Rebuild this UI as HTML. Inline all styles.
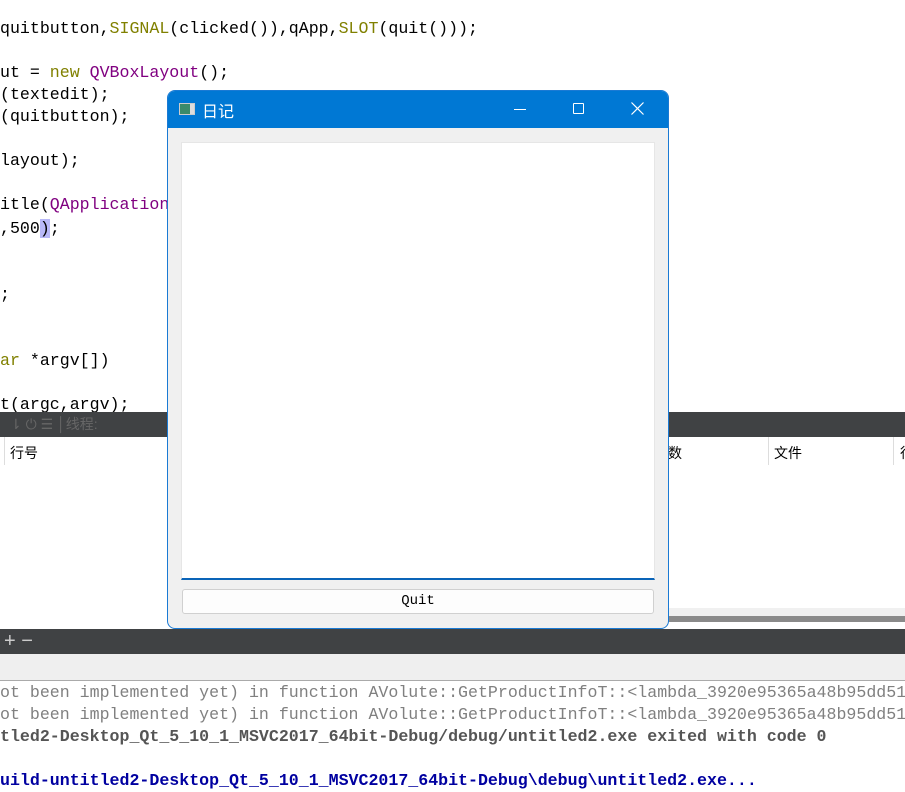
<!DOCTYPE html>
<html><head><meta charset="utf-8"><style>
*{margin:0;padding:0;box-sizing:border-box}
body{width:905px;height:792px;overflow:hidden;background:#fff;position:relative;font-family:"Liberation Sans","Noto Sans CJK SC",sans-serif}
.code{position:absolute;left:0;font:16.6px/22px "Liberation Mono","DejaVu Sans Mono",monospace;color:#000;white-space:pre}
.y{color:#808000}.p{color:#800080}
.abs{position:absolute}
.out{position:absolute;left:0;font:16.6px/22px "Liberation Mono",monospace;white-space:pre}
</style></head><body>
<div class="code" style="top:18px">quitbutton,<span class="y">SIGNAL</span>(clicked()),qApp,<span class="y">SLOT</span>(quit()));</div>
<div class="code" style="top:62px">ut = <span class="y">new</span> <span class="p">QVBoxLayout</span>();</div>
<div class="code" style="top:84px">(textedit);</div>
<div class="code" style="top:106px">(quitbutton);</div>
<div class="code" style="top:150px">layout);</div>
<div class="code" style="top:194px">itle(<span class="p">QApplication</span></div>
<div class="code" style="top:218px">,500<span style="background:#b8b8f8">)</span>;</div>
<div class="code" style="top:284px">;</div>
<div class="code" style="top:350px"><span class="y">ar</span> *argv[])</div>
<div class="code" style="top:394px">t(argc,argv);</div>

<div class="abs" style="left:0;top:412px;width:905px;height:25px;background:#404244"></div>
<div class="abs" style="left:10px;top:414px;font-size:14px;color:#666">⇂ ⏻ ☰ │线程:</div>
<div class="abs" style="left:4px;top:437px;width:1px;height:28px;background:#ddd"></div>
<div class="abs" style="left:10px;top:443px;font-size:14px;color:#000">行号</div>
<div class="abs" style="left:668px;top:443px;font-size:14px">数</div>
<div class="abs" style="left:768px;top:437px;width:1px;height:28px;background:#ddd"></div>
<div class="abs" style="left:774px;top:443px;font-size:14px">文件</div>
<div class="abs" style="left:893px;top:437px;width:1px;height:28px;background:#ddd"></div>
<div class="abs" style="left:900px;top:443px;font-size:14px">行</div>
<div class="abs" style="left:668px;top:608px;width:237px;height:8px;background:#f0f0f0"></div>
<div class="abs" style="left:668px;top:616px;width:237px;height:6px;background:#8a8a8a"></div>

<div class="abs" style="left:0;top:629px;width:905px;height:25px;background:#404244"></div>
<div class="abs" style="left:4px;top:629px;font-size:20px;color:#ccc;line-height:25px">+ −</div>
<div class="abs" style="left:0;top:654px;width:905px;height:27px;background:#efefef;border-bottom:1px solid #aaa"></div>
<div class="out" style="top:682px;color:#808080">ot been implemented yet) in function AVolute::GetProductInfoT::&lt;lambda_3920e95365a48b95dd51</div>
<div class="out" style="top:704px;color:#808080">ot been implemented yet) in function AVolute::GetProductInfoT::&lt;lambda_3920e95365a48b95dd51</div>
<div class="out" style="top:726px;color:#555;font-weight:bold">tled2-Desktop_Qt_5_10_1_MSVC2017_64bit-Debug/debug/untitled2.exe exited with code 0</div>
<div class="out" style="top:770px;color:#0000a0;font-weight:bold">uild-untitled2-Desktop_Qt_5_10_1_MSVC2017_64bit-Debug\debug\untitled2.exe...</div>

<div class="abs" style="left:167px;top:90px;width:502px;height:539px;border:1px solid #1a7ad4;border-radius:8px;background:#f0f0f0;overflow:hidden">
 <div style="height:37px;background:#0078d4;position:relative">
  <div class="abs" style="left:11px;top:12px;width:16px;height:12px;border:1px solid #ccc;background:linear-gradient(90deg,#3a8a6a 0 70%,#ddd 70%)"></div>
  <div class="abs" style="left:34px;top:7px;color:#fff;font-size:16px">日记</div>
  <div class="abs" style="left:346px;top:18px;width:12px;height:1px;background:#fff"></div>
  <div class="abs" style="left:405px;top:12px;width:11px;height:11px;border:1px solid #fff;border-radius:1px"></div>
  <svg class="abs" style="left:463px;top:11px" width="13" height="13"><path d="M0.5 0.5L12.5 12.5M12.5 0.5L0.5 12.5" stroke="#fff" stroke-width="1.2"/></svg>
 </div>
 <div class="abs" style="left:13px;top:51px;width:474px;height:438px;background:#fff;border:1px solid #e6e6e6;border-bottom:2px solid #0a64b8"></div>
 <div class="abs" style="left:14px;top:498px;width:472px;height:25px;background:#fdfdfd;border:1px solid #d0d0d0;border-radius:3px;text-align:center;font:14px/23px 'Liberation Mono',monospace;color:#000">Quit</div>
</div>
</body></html>
